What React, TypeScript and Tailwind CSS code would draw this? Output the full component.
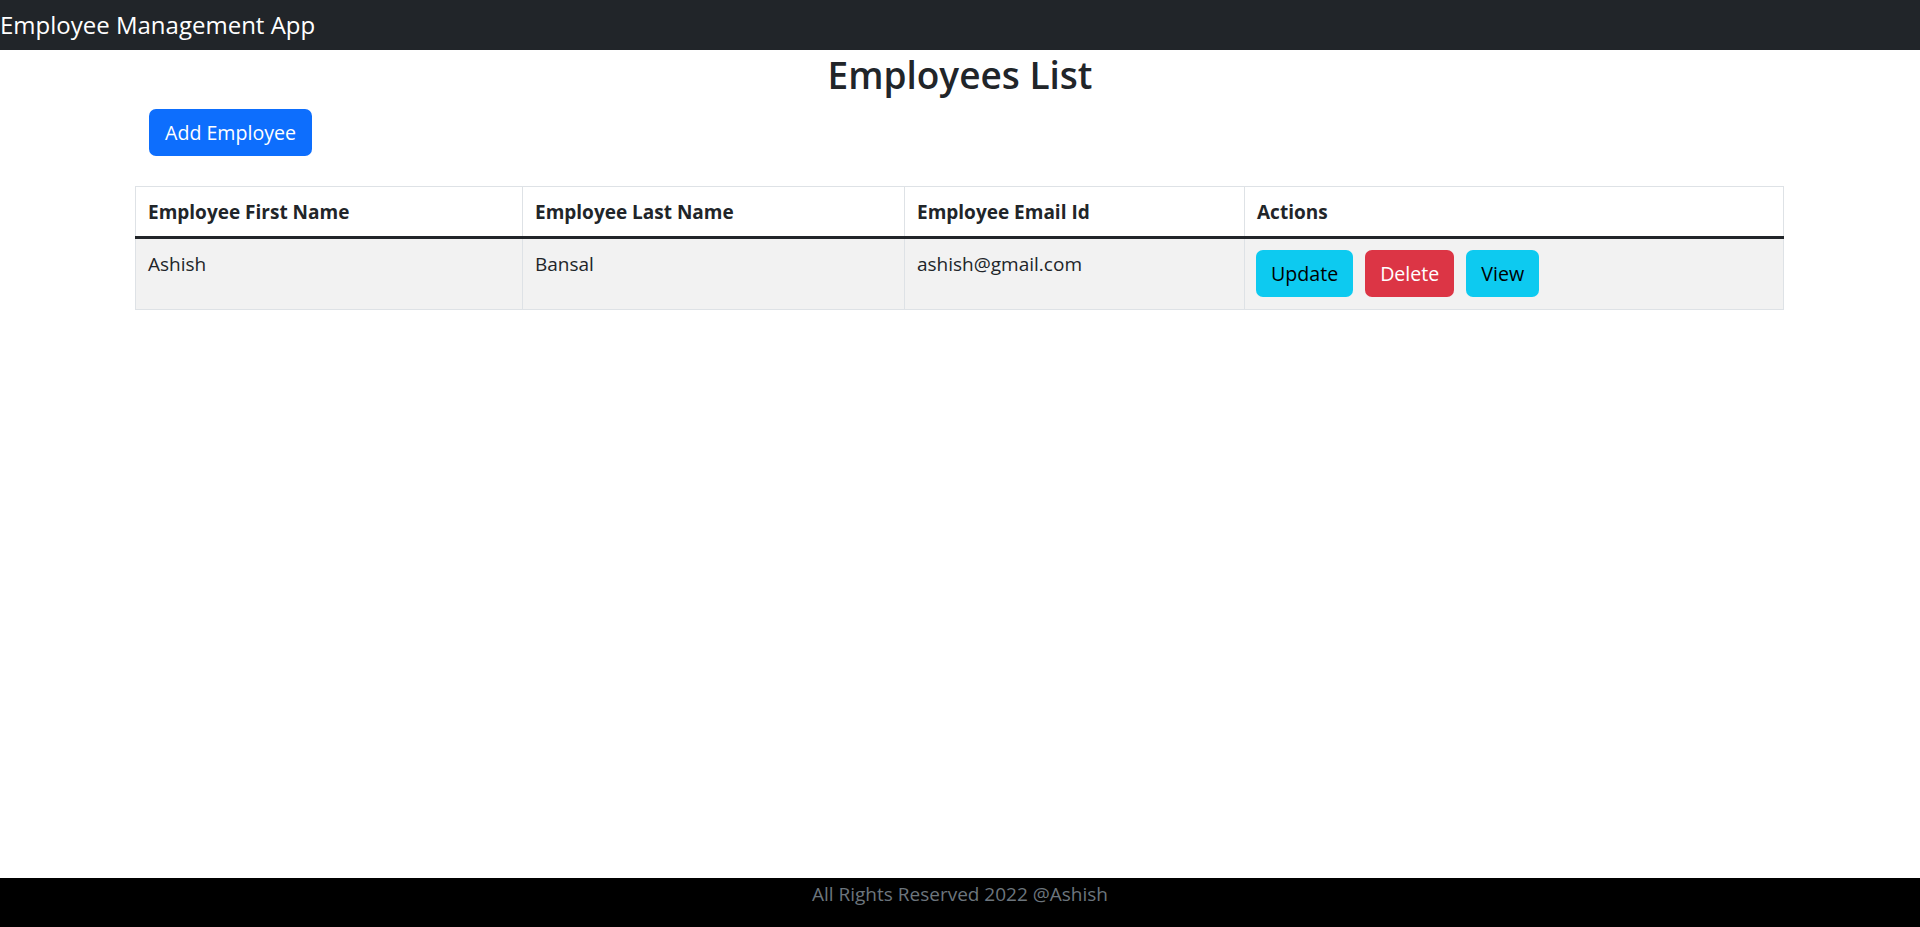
const employees = [
  { id: 1, firstName: "Ashish", lastName: "Bansal", emailId: "ashish@gmail.com" },
];

const font = { fontFamily: '"Open Sans", "Noto Sans", sans-serif' };

export default function App() {
  return (
    <div className="min-h-[927px] flex flex-col bg-white text-[#212529]" style={font}>
      <header className="h-[50px] bg-[#212529] flex items-center">
        <span className="text-white text-[24px] leading-none">Employee Management App</span>
      </header>

      <main className="flex-1">
        <h2 className="text-center text-[37px] font-semibold leading-[1.25] mt-[2px] mb-[11px]">Employees List</h2>
        <div className="pl-[149px]">
          <button className="h-[47px] px-[16px] rounded-[7px] bg-[#0d6efd] text-white text-[19.6px]">
            Add Employee
          </button>
        </div>

        <div className="px-[135px] mt-[30px]">
          <table className="w-[1649px] border-collapse border border-[#dee2e6] text-[19px]">
            <thead>
              <tr className="h-[51px] border-b-[3px] border-b-[#212529]">
                <th className="w-[387px] text-left font-bold px-[12px] border-r border-[#dee2e6]">Employee First Name</th>
                <th className="w-[382px] text-left font-bold px-[12px] border-r border-[#dee2e6]">Employee Last Name</th>
                <th className="w-[340px] text-left font-bold px-[12px] border-r border-[#dee2e6]">Employee Email Id</th>
                <th className="text-left font-bold px-[12px]">Actions</th>
              </tr>
            </thead>
            <tbody>
              {employees.map((employee) => (
                <tr key={employee.id} className="bg-[#f2f2f2] h-[72px]">
                  <td className="align-top px-[12px] pt-[11px] border-r border-[#dee2e6]">{employee.firstName}</td>
                  <td className="align-top px-[12px] pt-[11px] border-r border-[#dee2e6]">{employee.lastName}</td>
                  <td className="align-top px-[12px] pt-[11px] border-r border-[#dee2e6]">{employee.emailId}</td>
                  <td className="align-top px-[11px] pt-[11px]">
                    <div className="flex gap-[12px] text-[19.6px]">
                      <button className="h-[47px] px-[15px] rounded-[7px] bg-[#0dcaf0] text-black">Update</button>
                      <button className="h-[47px] px-[15px] rounded-[7px] bg-[#dc3545] text-white">Delete</button>
                      <button className="h-[47px] px-[15px] rounded-[7px] bg-[#0dcaf0] text-black">View</button>
                    </div>
                  </td>
                </tr>
              ))}
            </tbody>
          </table>
        </div>
      </main>

      <footer className="h-[49px] bg-black text-center">
        <span className="text-[#6c757d] text-[19px] leading-[32px]">All Rights Reserved 2022 @Ashish</span>
      </footer>
    </div>
  );
}
